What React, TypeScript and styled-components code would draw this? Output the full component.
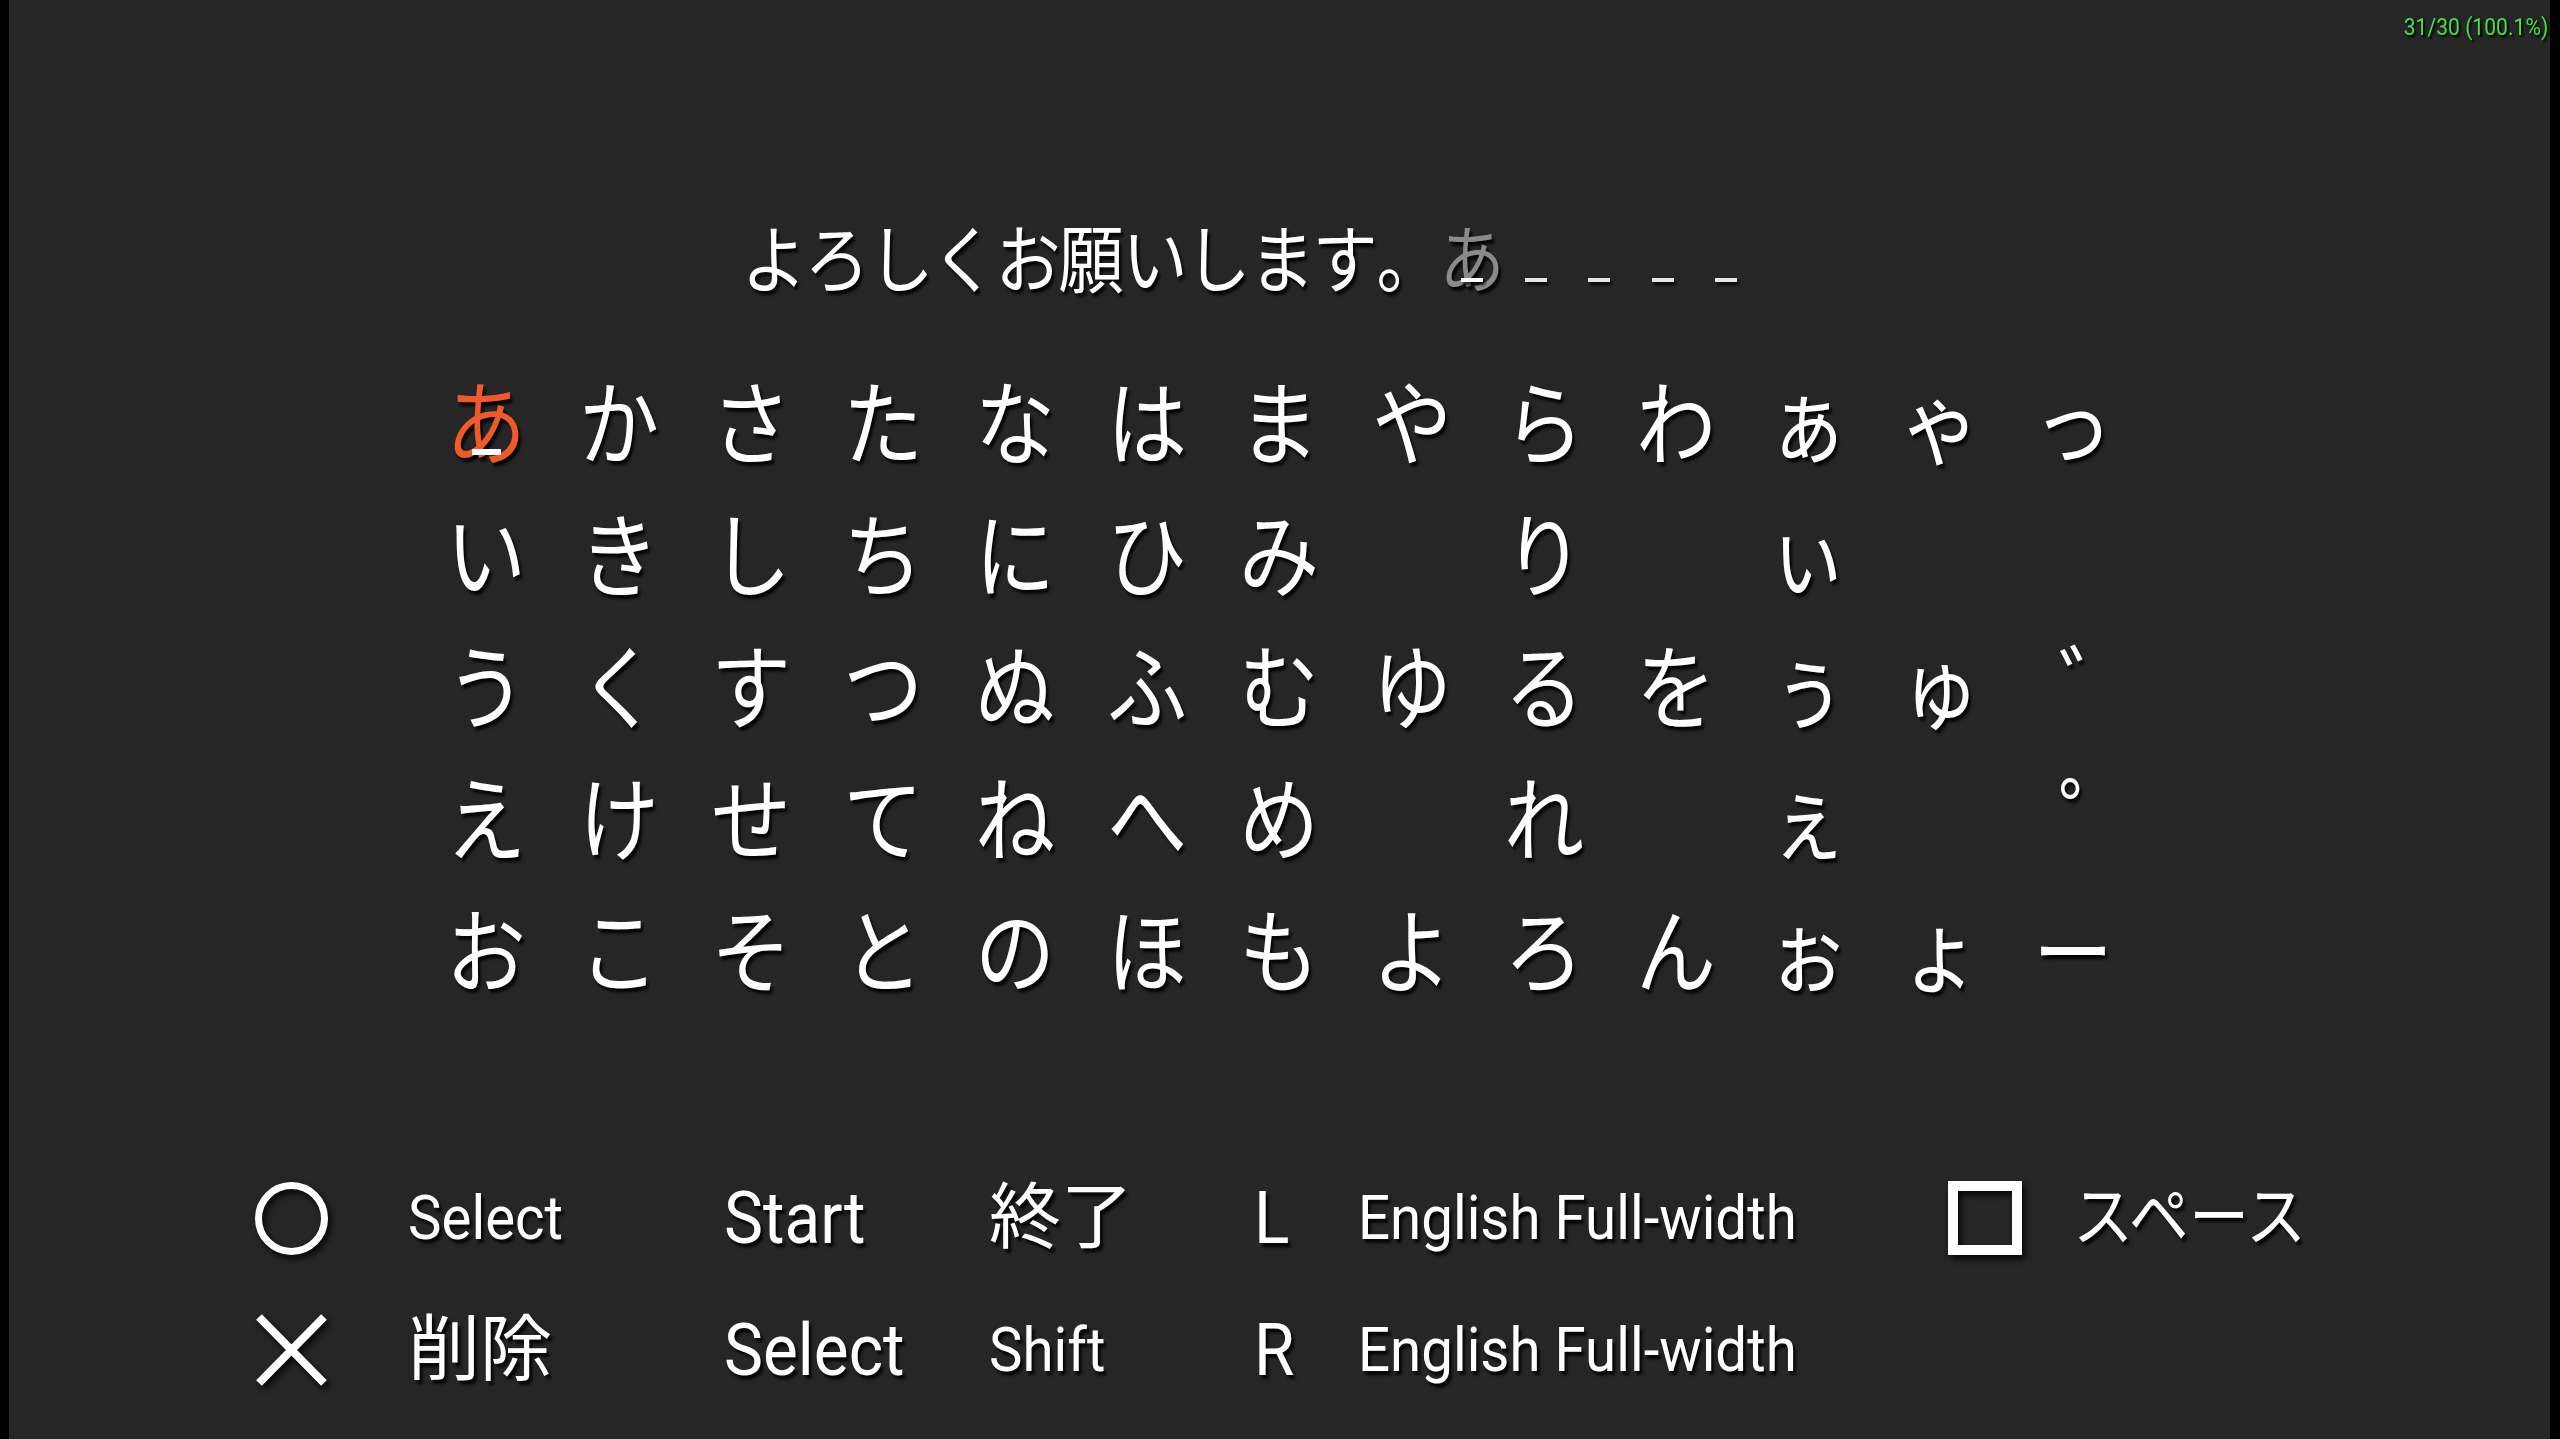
import styled, { createGlobalStyle } from "styled-components";

const GlobalStyle = createGlobalStyle`
  html, body {
    margin: 0;
    padding: 0;
    background: #000;
  }
  body {
    font-family: Roboto, "Noto Sans CJK JP", sans-serif;
  }
`;

const SHADOW = "3px 4px 3px rgba(0, 0, 0, 0.85)";

const Screen = styled.div`
  position: relative;
  box-sizing: border-box;
  width: 2541px;
  height: 1439px;
  margin-left: 9px;
  padding-top: 217px;
  background: #262626;
  color: #fff;
  overflow: hidden;
`;

const Fps = styled.div`
  position: absolute;
  top: 15px;
  right: 2px;
  font-family: Roboto, sans-serif;
  font-size: 24px;
  line-height: 1;
  color: #42e042;
  transform: scaleX(0.88);
  transform-origin: right top;
  text-shadow: 2px 2px 2px #000;
`;

const Composer = styled.div`
  display: flex;
  height: 75px;
  padding-left: 733px;
  font-family: "Noto Sans CJK JP", sans-serif;
  font-size: 74px;
  line-height: 75px;
`;

const Slot = styled.div<{ $pending?: boolean }>`
  position: relative;
  width: 63.5px;
  display: flex;
  justify-content: center;
  color: ${({ $pending }) => ($pending ? "#8a8a8a" : "#fff")};
  text-shadow: ${SHADOW};
`;

const Glyph = styled.span`
  display: inline-block;
  white-space: nowrap;
  transform: scaleX(0.88);
`;

const Blank = styled.span<{ $bright?: boolean }>`
  position: absolute;
  left: 50%;
  bottom: 10px;
  width: 22px;
  height: 4px;
  margin-left: -11px;
  background: ${({ $bright }) => ($bright ? "#fff" : "#e4e4e4")};
  box-shadow: 2px 3px 3px rgba(0, 0, 0, 0.8);
`;

const KanaGrid = styled.div`
  display: grid;
  grid-template-columns: repeat(13, 132.2px);
  grid-auto-rows: 132px;
  justify-content: center;
  margin-top: 60px;
  font-family: "Noto Sans CJK JP", sans-serif;
  font-size: 92px;
  line-height: 1;
`;

const Key = styled.div<{ $active?: boolean }>`
  position: relative;
  display: flex;
  align-items: center;
  justify-content: center;
  color: ${({ $active }) => ($active ? "#f05a28" : "#fff")};
  text-shadow: ${SHADOW};
`;

const KeyGlyph = styled.span<{ $mark?: boolean }>`
  display: inline-block;
  transform: ${({ $mark }) => ($mark ? "translateX(26px) scaleX(0.87)" : "scaleX(0.87)")};
`;

const Cursor = styled.i`
  position: absolute;
  left: 50%;
  top: calc(50% + 31px);
  width: 29px;
  height: 6px;
  margin-left: -14.5px;
  background: #fff;
`;

const Legend = styled.div`
  display: grid;
  grid-template-columns: 154px 316px 265px 265px 104px 590px 125px auto;
  grid-auto-rows: 132px;
  align-items: center;
  margin-top: 140px;
  padding-left: 245px;
`;

const Icon = styled.svg`
  display: block;
  filter: drop-shadow(3px 4px 3px rgba(0, 0, 0, 0.85));
`;

const sizes = {
  sm: { font: 62, scale: 0.91 },
  lg: { font: 73, scale: 0.9 },
  kanji: { font: 72, scale: 1 },
  kana: { font: 66, scale: 0.91 },
};

const Label = styled.span<{ $size: keyof typeof sizes }>`
  justify-self: start;
  display: inline-block;
  white-space: nowrap;
  font-size: ${({ $size }) => sizes[$size].font}px;
  line-height: 1;
  transform: scaleX(${({ $size }) => sizes[$size].scale});
  transform-origin: left center;
  text-shadow: ${SHADOW};
`;

const rows = [
  "あかさたなはまやらわぁゃっ",
  "いきしちにひみ　り　ぃ　　",
  "うくすつぬふむゆるをぅゅ゛",
  "えけせてねへめ　れ　ぇ　゜",
  "おこそとのほもよろんぉょー",
];

const marks = "゛゜";

const typed = "よろしくお願いします。".split("");

const CircleIcon = () => (
  <Icon width="75" height="75" viewBox="0 0 75 75">
    <circle cx="37.5" cy="37.5" r="33" fill="none" stroke="#fff" strokeWidth="7" />
  </Icon>
);

const CrossIcon = () => (
  <Icon width="75" height="74" viewBox="0 0 75 74">
    <path d="M5 4 L70 70 M70 4 L5 70" stroke="#fff" strokeWidth="8" fill="none" />
  </Icon>
);

const SquareIcon = () => (
  <Icon width="74" height="74" viewBox="0 0 74 74">
    <rect x="5" y="5" width="64" height="64" fill="none" stroke="#fff" strokeWidth="10" />
  </Icon>
);

export default function App() {
  return (
    <>
      <GlobalStyle />
      <Screen>
        <Fps>31/30 (100.1%)</Fps>

        <Composer>
          {typed.map((ch, i) => (
            <Slot key={i}>
              <Glyph>{ch}</Glyph>
            </Slot>
          ))}
          <Slot $pending>
            <Glyph>あ</Glyph>
            <Blank $bright />
          </Slot>
          {[0, 1, 2, 3].map((i) => (
            <Slot key={"b" + i}>
              <Blank />
            </Slot>
          ))}
        </Composer>

        <KanaGrid>
          {rows.map((row, r) =>
            row.split("").map((ch, c) => (
              <Key key={r + "-" + c} $active={r === 0 && c === 0}>
                {ch !== "　" && <KeyGlyph $mark={marks.includes(ch)}>{ch}</KeyGlyph>}
                {r === 0 && c === 0 && <Cursor />}
              </Key>
            ))
          )}
        </KanaGrid>

        <Legend>
          <CircleIcon />
          <Label $size="sm">Select</Label>
          <Label $size="lg">Start</Label>
          <Label $size="kanji">終了</Label>
          <Label $size="lg">L</Label>
          <Label $size="sm">English Full-width</Label>
          <SquareIcon />
          <Label $size="kana">スペース</Label>

          <CrossIcon />
          <Label $size="kanji">削除</Label>
          <Label $size="lg">Select</Label>
          <Label $size="sm">Shift</Label>
          <Label $size="lg">R</Label>
          <Label $size="sm">English Full-width</Label>
        </Legend>
      </Screen>
    </>
  );
}
